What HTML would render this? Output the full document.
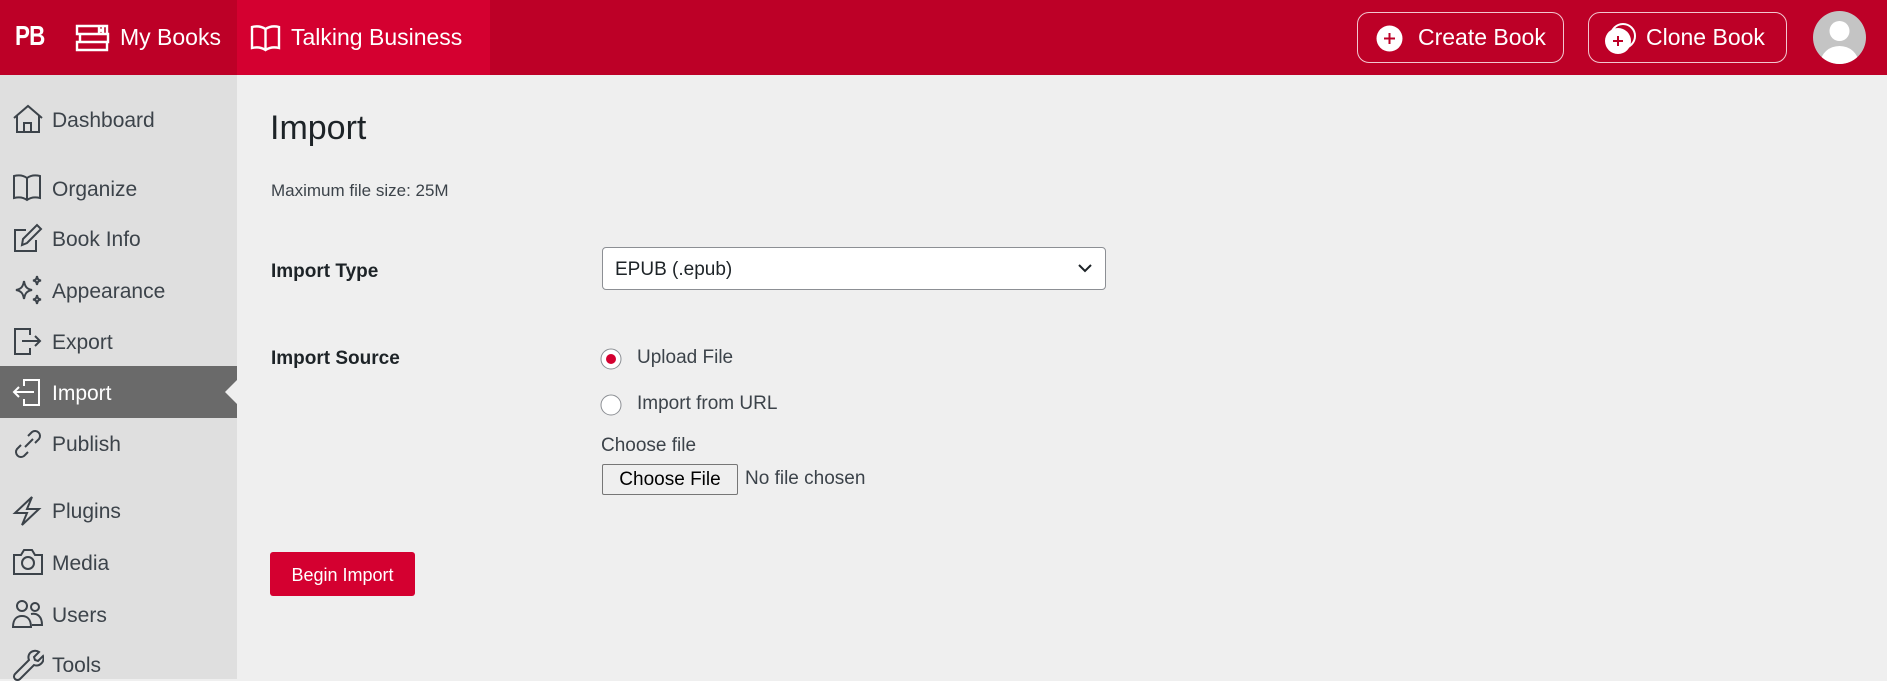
<!DOCTYPE html>
<html><head><meta charset="utf-8"><style>
*{box-sizing:border-box;margin:0;padding:0}
body{width:1887px;height:679px;overflow:hidden;background:#efefef;font-family:"Liberation Sans",sans-serif;position:relative;color:#1d2327}
.hdr{position:absolute;left:0;top:0;width:1887px;height:75px;background:#bd0027}
.hl{position:absolute;left:237px;top:0;width:253px;height:75px;background:#d40030}
.ht{position:absolute;color:#fff;font-size:23px;top:24px}
.btn{position:absolute;top:12px;height:51px;border:1.5px solid #f2c6cf;border-radius:12px;color:#fff;font-size:23px;line-height:48px}
.side{position:absolute;left:0;top:75px;width:237px;height:604px;background:#dfdfdf}
.it{position:absolute;left:0;width:237px;height:30px;font-size:21px;color:#3c434a}
.it span{position:absolute;left:52px;top:5px}
.it svg{position:absolute;left:12px;top:0}
.act{position:absolute;left:0;top:366px;width:237px;height:52px;background:#6a6a6a}
.abs{position:absolute}
</style></head><body>
<div class="hdr"></div>
<div class="hl"></div>
<div class="abs" style="left:15px;top:20px;color:#fff;font:bold 28px 'Liberation Sans Narrow','Liberation Sans',sans-serif;letter-spacing:-1px;transform:scaleX(0.8);transform-origin:left">PB</div>
<svg class="abs" style="left:75px;top:24px" width="36" height="28" viewBox="0 0 36 28" fill="none" stroke="#fff" stroke-width="2.4"><path d="M2 2h30v8H2zM5 10h28v8H5zM2 18h30v8H2z"/><path d="M24 2v6l2-2 2 2V2"/></svg>
<div class="ht" style="left:120px">My Books</div>
<svg class="abs" style="left:250px;top:24px" width="31" height="28" viewBox="0 0 31 28" fill="none" stroke="#fff" stroke-width="2.4"><path d="M15.5 5C11 2 6 2 2 3v21c4-1 9-1 13.5 2 4.5-3 9.5-3 13.5-2V3c-4-1-9-1-13.5 2zM15.5 5v21"/></svg>
<div class="ht" style="left:291px">Talking Business</div>
<div class="btn" style="left:1357px;width:207px"><svg class="abs" style="left:18px;top:12px" width="27" height="27"><circle cx="13.5" cy="13.5" r="13" fill="#fff"/><path d="M13.5 8v11M8 13.5h11" stroke="#bd0027" stroke-width="2"/></svg><span style="position:absolute;left:60px">Create Book</span></div>
<div class="btn" style="left:1588px;width:199px"><svg class="abs" style="left:14px;top:8px" width="36" height="34"><circle cx="20" cy="15" r="12" fill="none" stroke="#fff" stroke-width="2"/><circle cx="15" cy="20" r="13" fill="#fff"/><path d="M15 15v10M10 20h10" stroke="#bd0027" stroke-width="2"/></svg><span style="position:absolute;left:57px">Clone Book</span></div>
<svg class="abs" style="left:1813px;top:11px" width="53" height="53"><clipPath id="c"><circle cx="26.5" cy="26.5" r="26.5"/></clipPath><circle cx="26.5" cy="26.5" r="26.5" fill="#c4c4c4"/><g clip-path="url(#c)" fill="#fff"><circle cx="26.5" cy="20" r="10"/><ellipse cx="26.5" cy="52" rx="19" ry="17"/></g></svg>

<div class="side"></div>
<div class="act"></div>
<svg class="abs" style="left:225px;top:380px" width="12" height="24"><path d="M12 0L0 12l12 12z" fill="#efefef"/></svg>
<div class="it" style="top:104px"><svg width="32" height="30" viewBox="0 0 32 30" fill="none" stroke="#3c434a" stroke-width="2"><path d="M2 14L16 2l14 12M5 11v17h22V11M12 28v-9h7v9"/></svg><span>Dashboard</span></div>
<div class="it" style="top:173px"><svg width="32" height="30" viewBox="0 0 32 30" fill="none" stroke="#3c434a" stroke-width="2"><path d="M15 5C11 2 6 2 2 3v22c4-1 9-1 13 2 4-3 9-3 13-2V3c-4-1-9-1-13 2zM15 5v22"/></svg><span>Organize</span></div>
<div class="it" style="top:223px"><svg width="32" height="30" viewBox="0 0 32 30" fill="none" stroke="#3c434a" stroke-width="2"><path d="M14 7H3v21h21V17M10 22l1-6L25 2l4 4-14 14z"/></svg><span>Book Info</span></div>
<div class="it" style="top:275px"><svg width="32" height="30" viewBox="0 0 32 30" fill="none" stroke="#3c434a" stroke-width="2"><path d="M12 6c1 6 3 8 8 9-5 1-7 3-8 9-1-6-3-8-8-9 5-1 7-3 8-9zM25 1c.5 3 1 4 4 4.5-3 .5-3.5 1.5-4 4.5-.5-3-1-4-4-4.5 3-.5 3.5-1.5 4-4.5zM25 20c.5 3 1 4 4 4.5-3 .5-3.5 1.5-4 4.5-.5-3-1-4-4-4.5 3-.5 3.5-1.5 4-4.5z"/></svg><span>Appearance</span></div>
<div class="it" style="top:326px"><svg width="32" height="30" viewBox="0 0 32 30" fill="none" stroke="#3c434a" stroke-width="2"><path d="M18 9V3H3v25h15v-6M10 15h18M23 10l5 5-5 5"/></svg><span>Export</span></div>
<div class="it" style="top:377px;color:#fff"><svg width="32" height="30" viewBox="0 0 32 30" fill="none" stroke="#fff" stroke-width="2"><path d="M12 9V3h15v25H12v-6M22 15H2M7 10l-5 5 5 5"/></svg><span>Import</span></div>
<div class="it" style="top:428px"><svg width="32" height="32" viewBox="0 0 32 32" fill="none" stroke="#3c434a" stroke-width="2"><path d="M13 19l8-8M16 8l4-4a5 5 0 017 7l-4 4M16 24l-4 4a5 5 0 01-7-7l4-4"/></svg><span>Publish</span></div>
<div class="it" style="top:495px"><svg width="32" height="32" viewBox="0 0 32 32" fill="none" stroke="#3c434a" stroke-width="2"><path d="M20 2L3 18h12l-5 12 17-16H15z"/></svg><span>Plugins</span></div>
<div class="it" style="top:547px"><svg width="32" height="30" viewBox="0 0 32 30" fill="none" stroke="#3c434a" stroke-width="2"><path d="M2 8h7l3-5h8l3 5h7v19H2z"/><circle cx="16" cy="16" r="6"/></svg><span>Media</span></div>
<div class="it" style="top:599px"><svg width="32" height="30" viewBox="0 0 32 30" fill="none" stroke="#3c434a" stroke-width="2"><circle cx="10" cy="7" r="5"/><circle cx="23" cy="8" r="4"/><path d="M1 28c0-8 4-11 9-11s9 3 9 11zM19 15c6-1 11 2 11 11h-10"/></svg><span>Users</span></div>
<div class="it" style="top:649px"><svg width="32" height="32" viewBox="0 0 32 32" fill="none" stroke="#3c434a" stroke-width="2"><path d="M18 4a7 7 0 019-1l-5 5 1 3 3 1 5-5a7 7 0 01-9 9L8 30a3 3 0 01-5-5l14-14a7 7 0 011-7z"/></svg><span>Tools</span></div>

<div class="abs" style="left:270px;top:109px;font-size:34px;color:#1d2327">Import</div>
<div class="abs" style="left:271px;top:181px;font-size:17px;color:#3c434a">Maximum file size: 25M</div>
<div class="abs" style="left:271px;top:261px;font-size:19px;font-weight:bold">Import Type</div>
<div class="abs" style="left:602px;top:247px;width:504px;height:43px;background:#fff;border:1px solid #8c8f94;border-radius:4px;font-size:19px;padding:11px 12px">EPUB (.epub)<svg class="abs" style="right:12px;top:15px" width="16" height="10"><path d="M2 2l6 6 6-6" fill="none" stroke="#1d2327" stroke-width="2"/></svg></div>
<div class="abs" style="left:271px;top:348px;font-size:19px;font-weight:bold">Import Source</div>
<svg class="abs" style="left:600px;top:348px" width="22" height="22"><circle cx="11" cy="11" r="10" fill="#fff" stroke="#8c8f94"/><circle cx="11" cy="11" r="5" fill="#d40030"/></svg>
<div class="abs" style="left:637px;top:347px;font-size:19px;color:#3c434a">Upload File</div>
<svg class="abs" style="left:600px;top:394px" width="22" height="22"><circle cx="11" cy="11" r="10" fill="#fff" stroke="#8c8f94"/></svg>
<div class="abs" style="left:637px;top:393px;font-size:19px;color:#3c434a">Import from URL</div>
<div class="abs" style="left:601px;top:435px;font-size:19px;color:#3c434a">Choose file</div>
<div class="abs" style="left:602px;top:464px;width:136px;height:31px;background:#efefef;border:1px solid #767676;border-radius:2px;font-size:19px;text-align:center;line-height:29px;color:#000">Choose File</div>
<div class="abs" style="left:745px;top:468px;font-size:19px;color:#3c434a">No file chosen</div>
<div class="abs" style="left:270px;top:552px;width:145px;height:44px;background:#d40030;border-radius:3px;color:#fff;font-size:18px;text-align:center;line-height:46px">Begin Import</div>
</body></html>
